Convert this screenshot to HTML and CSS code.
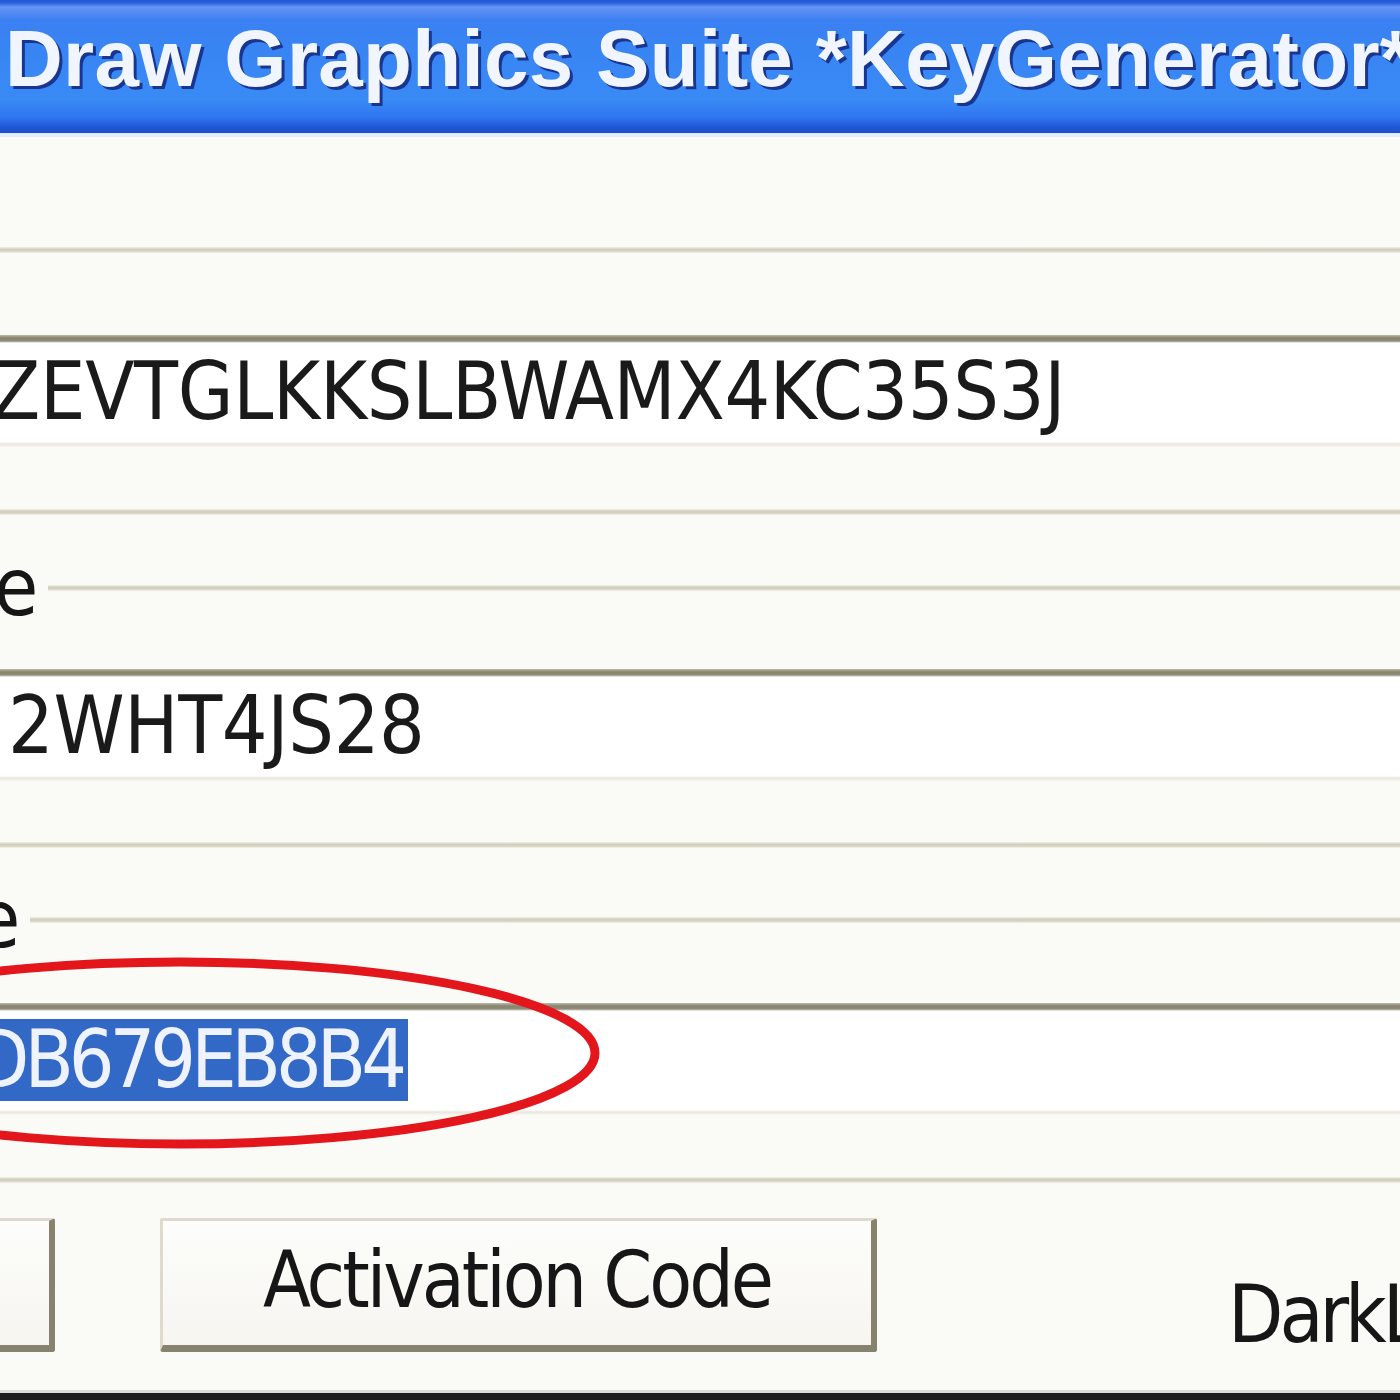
FILE: index.html
```html
<!DOCTYPE html>
<html>
<head>
<meta charset="utf-8">
<title>KeyGenerator</title>
<link rel="stylesheet" href="styles.css">
</head>
<body>
<div class="window">
  <div class="titlebar"><span class="title">Draw Graphics Suite *KeyGenerator*</span></div>
  <div class="client">
    <section class="group group-first">
      <div class="legend"><span class="legend-line"></span></div>
      <div class="edit"><span class="value value-serial">ZEVTGLKKSLBWAMX4KC35S3J</span></div>
      <div class="group-bottom"></div>
    </section>
    <section class="group group-second">
      <div class="legend"><span class="legend-text legend-a">e</span><span class="legend-line"></span></div>
      <div class="edit"><span class="value value-install">2WHT4JS28</span></div>
      <div class="group-bottom"></div>
    </section>
    <section class="group group-third">
      <div class="legend"><span class="legend-text legend-b">e</span><span class="legend-line"></span></div>
      <div class="edit"><span class="value value-activation"><span class="selected">DB679EB8B4</span></span></div>
      <div class="group-bottom"></div>
    </section>
    <div class="buttons">
      <button class="btn btn-first" type="button"></button>
      <button class="btn btn-activation" type="button">Activation Code</button>
      <span class="credit">DarkL</span>
    </div>
  </div>
  <div class="bottom-edge"></div>
  <svg class="annotation" width="1400" height="1400" viewBox="0 0 1400 1400" aria-hidden="true">
    <ellipse cx="180" cy="1053" rx="415" ry="91" fill="none" stroke="#e3161c" stroke-width="9"/>
  </svg>
</div>
</body>
</html>
```

FILE: styles.css
```css
html, body {
  margin: 0;
  padding: 0;
}

body {
  width: 1400px;
  height: 1400px;
  overflow: hidden;
  background: #fafaf7;
  font-family: "DejaVu Sans Condensed", "Liberation Sans", Arial, sans-serif;
  color: #161616;
}

.window {
  position: relative;
  height: 1400px;
  display: flex;
  flex-direction: column;
  overflow: hidden;
}

.titlebar {
  box-sizing: border-box;
  height: 137px;
  padding: 13px 0 0 5px;
  background: linear-gradient(to bottom,
    #2356d2 0, #2d62dd 3px, #6595f5 7px, #5a8cf3 11px, #3b80f2 20px,
    #3786f4 60px, #3a8af6 100px, #2f74ee 118px, #2057d6 127px, #1b4dc8 133px);
  border-bottom: 4px solid #e4ecfb;
  white-space: nowrap;
  overflow: hidden;
}

.title {
  font-family: "Liberation Sans", Arial, sans-serif;
  font-weight: bold;
  font-size: 80px;
  line-height: normal;
  letter-spacing: 0.3px;
  color: #f0f5ff;
  text-shadow: 3px 3px 0 #1a3590;
}

.client {
  flex: 1;
  display: flex;
  flex-direction: column;
}

.group {
  display: flex;
  flex-direction: column;
}

.group-first {
  margin-top: 91px;
}

.group-second {
  margin-top: 51px;
}

.group-third {
  margin-top: 50px;
}

.legend {
  display: flex;
  align-items: center;
  height: 44px;
}

.legend-text {
  font-size: 80px;
  line-height: 44px;
}

.legend-a {
  margin-left: -6px;
}

.legend-b {
  margin-left: -24px;
}

.legend-line,
.group-bottom {
  flex: 1;
  height: 6px;
  margin-left: 10px;
  background: linear-gradient(to bottom, #f1f0e8 0, #d2cebb 40%, #d8d5c4 70%, #f5f4ef 100%);
}

.group-first .legend-line {
  margin-left: 0;
}

.group-bottom {
  flex: none;
  margin: 62px 0 0 0;
}

.group-second .group-bottom {
  margin-top: 61px;
}

.edit {
  height: 112px;
  margin-top: 59px;
  display: flex;
  align-items: center;
  white-space: nowrap;
  overflow: hidden;
  background: linear-gradient(to bottom,
    #bdbaa8 0, #86836f 3px, #8f8c79 6px, #ffffff 8px,
    #ffffff calc(100% - 5px), #e9e7db calc(100% - 3px), #f7f6f1 100%);
}

.group-first .edit {
  margin-top: 63px;
}

.group-third .edit {
  margin-top: 61px;
}

.value {
  font-size: 80px;
  line-height: 85px;
  letter-spacing: -0.3px;
  color: #1a1a1a;
}

.value-serial {
  margin-left: -9px;
}

.value-install {
  margin-left: 8px;
}

.value-activation {
  margin-left: -26px;
  letter-spacing: -5px;
}

.selected {
  display: inline-block;
  line-height: 82px;
  padding-right: 6px;
  background: #3369c6;
  color: #eef3ff;
}

.buttons {
  display: flex;
  align-items: flex-start;
  margin: 35px 0 0 -50px;
  white-space: nowrap;
}

.btn {
  flex-shrink: 0;
  box-sizing: border-box;
  height: 134px;
  padding: 0;
  background: linear-gradient(to bottom, #fdfdfb, #f6f5f0);
  border-style: solid;
  border-width: 3px 6px 7px 3px;
  border-color: #dedbcc #86826d #86826d #dedbcc;
  border-radius: 3px;
  font-family: "DejaVu Sans Condensed", "Liberation Sans", Arial, sans-serif;
  font-size: 78px;
  letter-spacing: -3px;
  color: #161616;
}

.btn-first {
  width: 105px;
}

.btn-activation {
  width: 717px;
  margin-left: 105px;
  padding-bottom: 6px;
}

.credit {
  flex-shrink: 0;
  margin: 52px 0 0 351px;
  font-size: 80px;
  line-height: 90px;
  letter-spacing: -4px;
  color: #161616;
}

.bottom-edge {
  height: 7px;
  background: #1e1e1e;
  border-top: 3px solid #dcdcd8;
}

.annotation {
  position: absolute;
  left: 0;
  top: 0;
  pointer-events: none;
}
```
